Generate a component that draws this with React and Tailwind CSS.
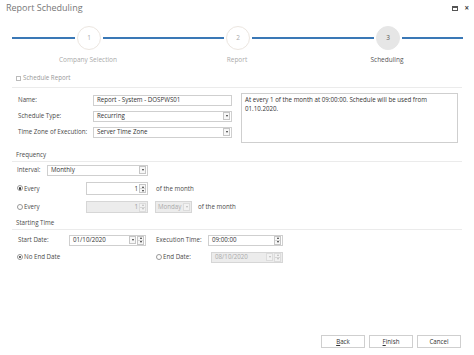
import React from 'react';

function DropBtn({ disabled }) {
  return (
    <div className={`w-[7px] h-[8px] border flex items-center justify-center ${disabled ? 'border-[#dcdcdc] bg-[#f2f2f2]' : 'border-[#c6c6c6] bg-[#f7f7f7]'}`}>
      <div className={`w-0 h-0 border-l-[1.5px] border-r-[1.5px] border-t-[2px] border-l-transparent border-r-transparent ${disabled ? 'border-t-[#bbb]' : 'border-t-[#333]'}`} />
    </div>
  );
}

function Spin({ disabled }) {
  const c = disabled ? 'border-b-[#bbb]' : 'border-b-[#333]';
  const c2 = disabled ? 'border-t-[#bbb]' : 'border-t-[#333]';
  return (
    <div className={`w-[7px] h-[9px] border flex flex-col ${disabled ? 'border-[#dcdcdc] bg-[#f2f2f2]' : 'border-[#c6c6c6] bg-[#f7f7f7]'}`}>
      <div className="flex-1 flex items-center justify-center border-b border-[#d6d6d6]">
        <div className={`w-0 h-0 border-l-[1.5px] border-r-[1.5px] border-b-[2px] border-l-transparent border-r-transparent ${c}`} />
      </div>
      <div className="flex-1 flex items-center justify-center">
        <div className={`w-0 h-0 border-l-[1.5px] border-r-[1.5px] border-t-[2px] border-l-transparent border-r-transparent ${c2}`} />
      </div>
    </div>
  );
}

function Radio({ checked, label }) {
  return (
    <div className="flex items-center gap-[1px] whitespace-nowrap">
      <div className="w-[6px] h-[6px] rounded-full border border-[#999] bg-white flex items-center justify-center">
        {checked && <div className="w-[2.5px] h-[2.5px] rounded-full bg-[#333]" />}
      </div>
      <span>{label}</span>
    </div>
  );
}

function Step({ n, active }) {
  return (
    <div className={`w-[24px] h-[24px] rounded-full border flex items-center justify-center text-[6.5px] ${active ? 'bg-[#e6e6e6] border-[#e6e6e6] text-[#555]' : 'bg-white border-[#ece6e0] text-[#aaa]'}`}>
      {n}
    </div>
  );
}

export default function App() {
  return (
    <div className="w-[474px] h-[355px] bg-white flex flex-col font-['Open_Sans',sans-serif] text-[6.2px] text-[#4a4a4a] overflow-hidden whitespace-nowrap">
      {/* Title bar */}
      <div className="h-[16px] flex items-center justify-between pl-[6px] pr-[5px]">
        <span className="text-[9px] text-[#777]">Report Scheduling</span>
        <div className="flex items-center gap-[6px]">
          <div className="w-[6px] h-[5px] border border-[#555] border-t-2" />
          <span className="text-[8px] font-bold text-[#444] leading-none">×</span>
        </div>
      </div>

      {/* Stepper */}
      <div className="mt-[10px] pl-[12px] flex items-center">
        <div className="w-[63px] h-[1.5px] bg-[#3a78b6]" />
        <div className="w-[2px]" />
        <Step n="1" />
        <div className="w-[2px]" />
        <div className="w-[121px] h-[1.5px] bg-[#3a78b6]" />
        <div className="w-[2px]" />
        <Step n="2" />
        <div className="w-[2px]" />
        <div className="w-[122px] h-[1.5px] bg-[#3a78b6]" />
        <div className="w-[2px]" />
        <Step n="3" active />
        <div className="w-[2px]" />
        <div className="w-[61px] h-[1.5px] bg-[#3a78b6]" />
      </div>
      <div className="mt-[5px] h-[10px] flex items-center text-[6.5px]">
        <span className="ml-[38px] w-[100px] text-center text-[#aaa]">Company Selection</span>
        <span className="ml-[49px] w-[100px] text-center text-[#aaa]">Report</span>
        <span className="ml-[50px] w-[100px] text-center text-[#555]">Scheduling</span>
      </div>

      {/* Schedule Report checkbox */}
      <div className="mt-[8px] h-[10px] pl-[16px] flex items-center gap-[2px] text-[#999]">
        <div className="w-[5px] h-[5px] border border-[#bbb]" />
        <span>Schedule Report</span>
      </div>
      <div className="mt-[4px] mx-[12px] h-px bg-[#ebebeb]" />

      {/* Name / type / tz + summary */}
      <div className="mt-[4px] mx-[12px] flex">
        <div className="w-[220px] flex flex-col">
          {[
            ['Name:', 'Report - System - DOSPWS01', false],
            ['Schedule Type:', 'Recurring', true],
            ['Time Zone of Execution:', 'Server Time Zone', true],
          ].map(([l, v, dd]) => (
            <div key={l} className="h-[16px] flex items-center">
              <span className="w-[81px] pl-[6px]">{l}</span>
              <div className="w-[139px] h-[11px] border border-[#cfcfcf] flex items-center justify-between pl-[3px] pr-[1px] text-[#333]">
                <span>{v}</span>
                {dd && <DropBtn />}
              </div>
            </div>
          ))}
        </div>
        <div className="ml-[9px] mt-[1px] w-[217px] h-[50px] border border-[#cfcfcf] px-[3px] py-[2px] leading-[8.5px] text-[#333] whitespace-normal">
          At every 1 of the month at 09:00:00. Schedule will be used from 01.10.2020.
        </div>
      </div>

      {/* Frequency */}
      <div className="mt-[7px] h-[10px] pl-[16px] flex items-center">Frequency</div>
      <div className="mt-[1px] mx-[12px] h-px bg-[#ebebeb]" />

      <div className="mt-[2px] h-[12px] pl-[17px] flex items-center">
        <span className="w-[30px]">Interval:</span>
        <div className="w-[101px] h-[11px] border border-[#cfcfcf] flex items-center justify-between pl-[3px] pr-[1px] text-[#333]">
          <span>Monthly</span>
          <DropBtn />
        </div>
      </div>

      <div className="mt-[6px] h-[13px] pl-[17px] flex items-center">
        <div className="w-[69px]"><Radio checked label="Every" /></div>
        <div className="w-[62px] h-[13px] border border-[#cfcfcf] flex items-center justify-end gap-[1px] pr-[1px] text-[#333]">
          <span>1</span>
          <Spin />
        </div>
        <span className="ml-[8px]">of the month</span>
      </div>

      <div className="mt-[6px] h-[12px] pl-[17px] flex items-center">
        <div className="w-[69px]"><Radio label="Every" /></div>
        <div className="w-[62px] h-[12px] border border-[#d6d6d6] bg-[#ececec] flex items-center justify-end gap-[1px] pr-[1px] text-[#999]">
          <span>1</span>
          <Spin disabled />
        </div>
        <div className="ml-[7px] w-[37px] h-[12px] border border-[#d6d6d6] bg-[#ececec] flex items-center justify-between pl-[2px] pr-[1px] text-[#aaa]">
          <span>Monday</span>
          <DropBtn disabled />
        </div>
        <span className="ml-[6px]">of the month</span>
      </div>

      {/* Starting Time */}
      <div className="mt-[5px] h-[10px] pl-[16px] flex items-center">Starting Time</div>
      <div className="mt-[1px] mx-[12px] h-px bg-[#ebebeb]" />

      <div className="mt-[4px] h-[12px] pl-[18px] flex items-center">
        <span className="w-[51px]">Start Date:</span>
        <div className="w-[77px] h-[11px] border border-[#cfcfcf] flex items-center justify-between pl-[3px] pr-[1px] text-[#333]">
          <span>01/10/2020</span>
          <div className="flex items-center gap-[1px]">
            <DropBtn />
            <Spin />
          </div>
        </div>
        <span className="ml-[10px] w-[52px]">Execution Time:</span>
        <div className="w-[75px] h-[11px] border border-[#cfcfcf] flex items-center justify-between pl-[3px] pr-[1px] text-[#333]">
          <span>09:00:00</span>
          <Spin />
        </div>
      </div>

      <div className="mt-[5px] h-[12px] pl-[17px] flex items-center">
        <div className="w-[139px]"><Radio checked label="No End Date" /></div>
        <div className="w-[55px]"><Radio label="End Date:" /></div>
        <div className="w-[72px] h-[11px] border border-[#d6d6d6] bg-[#ececec] flex items-center justify-between pl-[3px] pr-[1px] text-[#aaa]">
          <span>08/10/2020</span>
          <div className="flex items-center gap-[1px]">
            <DropBtn disabled />
            <Spin disabled />
          </div>
        </div>
      </div>

      {/* Buttons */}
      <div className="mt-auto mb-[7px] pr-[13px] flex justify-end gap-[4px]">
        {['Back', 'Finish', 'Cancel'].map((b, i) => (
          <button key={b} className="w-[44px] h-[13px] border border-[#cfcfcf] bg-white flex items-center justify-center text-[#333]">
            {i < 2 ? <span><span className="underline">{b[0]}</span>{b.slice(1)}</span> : b}
          </button>
        ))}
      </div>
    </div>
  );
}
